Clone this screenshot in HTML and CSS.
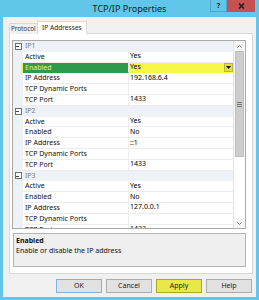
FILE: index.html
```html
<!DOCTYPE html>
<html>
<head>
<meta charset="utf-8">
<link rel="stylesheet" href="styles.css">
</head>
<body>
<div class="window">
  <div class="titlebar">
    <div class="title">TCP/IP Properties</div>
    <div class="caption-btns">
      <div class="cap-help">?</div>
      <div class="cap-close">
        <svg width="7" height="6" viewBox="0 0 7 6"><path d="M1 0.5 L6 5.5 M6 0.5 L1 5.5" stroke="#222" stroke-width="1.6"/></svg>
      </div>
    </div>
  </div>
  <div class="client">
    <div class="tabs">
      <div class="tab">Protocol</div>
      <div class="tab active">IP Addresses</div>
    </div>
    <div class="panel">
      <div class="grid">
        <div class="rows">
          <div class="cat"><span class="tog"></span><span class="cat-name">IP1</span></div>
          <div class="row"><span class="gut"></span><span class="name">Active</span><span class="val">Yes</span></div>
          <div class="row sel"><span class="gut"></span><span class="name">Enabled</span><span class="val">Yes<span class="drop"><svg width="5" height="3" viewBox="0 0 5 3"><path d="M0 0 H5 L2.5 3 Z" fill="#111"/></svg></span></span></div>
          <div class="row"><span class="gut"></span><span class="name">IP Address</span><span class="val">192.168.6.4</span></div>
          <div class="row"><span class="gut"></span><span class="name">TCP Dynamic Ports</span><span class="val"></span></div>
          <div class="row"><span class="gut"></span><span class="name">TCP Port</span><span class="val">1433</span></div>
          <div class="cat"><span class="tog"></span><span class="cat-name">IP2</span></div>
          <div class="row"><span class="gut"></span><span class="name">Active</span><span class="val">Yes</span></div>
          <div class="row"><span class="gut"></span><span class="name">Enabled</span><span class="val">No</span></div>
          <div class="row"><span class="gut"></span><span class="name">IP Address</span><span class="val">::1</span></div>
          <div class="row"><span class="gut"></span><span class="name">TCP Dynamic Ports</span><span class="val"></span></div>
          <div class="row"><span class="gut"></span><span class="name">TCP Port</span><span class="val">1433</span></div>
          <div class="cat"><span class="tog"></span><span class="cat-name">IP3</span></div>
          <div class="row"><span class="gut"></span><span class="name">Active</span><span class="val">Yes</span></div>
          <div class="row"><span class="gut"></span><span class="name">Enabled</span><span class="val">No</span></div>
          <div class="row"><span class="gut"></span><span class="name">IP Address</span><span class="val">127.0.0.1</span></div>
          <div class="row"><span class="gut"></span><span class="name">TCP Dynamic Ports</span><span class="val"></span></div>
          <div class="row"><span class="gut"></span><span class="name">TCP Port</span><span class="val">1433</span></div>
        </div>
        <div class="scrollbar">
          <div class="sb-btn"><svg width="5" height="3" viewBox="0 0 5 3"><path d="M0.3 2.7 L2.5 0.5 L4.7 2.7" fill="none" stroke="#777" stroke-width="0.9"/></svg></div>
          <div class="sb-thumb"><span class="grip"></span></div>
          <div class="sb-track"></div>
          <div class="sb-btn"><svg width="5" height="3" viewBox="0 0 5 3"><path d="M0.3 0.3 L2.5 2.5 L4.7 0.3" fill="none" stroke="#777" stroke-width="0.9"/></svg></div>
        </div>
      </div>
      <div class="desc">
        <div class="desc-title">Enabled</div>
        <div class="desc-text">Enable or disable the IP address</div>
      </div>
    </div>
    <div class="buttons">
      <div class="btn default">OK</div>
      <div class="btn">Cancel</div>
      <div class="btn apply">Apply</div>
      <div class="btn">Help</div>
    </div>
  </div>
</div>
</body>
</html>
```

FILE: styles.css
```css
* { box-sizing: border-box; }
html, body { margin: 0; padding: 0; }
body {
  background: #62c6eb;
  font-family: "Noto Sans", "Open Sans", sans-serif;
  font-size: 7px;
  color: #000;
}
.window {
  width: 259px;
  height: 300px;
  background: #62c6eb;
  display: flex;
  flex-direction: column;
}
.titlebar {
  height: 17px;
  display: flex;
  align-items: flex-start;
}
.title {
  flex: 1;
  margin-left: 49px;
  text-align: center;
  font-size: 9px;
  line-height: 17px;
  color: #1a1a1a;
}
.caption-btns {
  display: flex;
  margin-right: 4px;
}
.cap-help {
  width: 17px;
  height: 12px;
  border: 1px solid #4aa6c8;
  border-top: none;
  background: #62c6eb;
  font-size: 7px;
  font-weight: bold;
  line-height: 11px;
  text-align: center;
  color: #111;
}
.cap-close {
  width: 28px;
  height: 12px;
  background: #c75050;
  display: flex;
  align-items: center;
  justify-content: center;
}
.client {
  flex: 1;
  margin: 0 3px 3px 3px;
  background: #f0f0f0;
  padding: 4px 4px 0 6px;
  display: flex;
  flex-direction: column;
}
.tabs {
  display: flex;
  align-items: flex-end;
  height: 13px;
  position: relative;
  z-index: 1;
  margin-bottom: -1px;
}
.tab {
  height: 11px;
  width: 29px;
  padding: 0 0 0 1px;
  border: 1px solid #d9d9d9;
  border-bottom: none;
  background: #f0f0f0;
  font-size: 6.3px;
  line-height: 10px;
  color: #333;
  white-space: nowrap;
  overflow: hidden;
}
.tab.active {
  height: 13px;
  width: 50px;
  background: #fff;
  padding-left: 4px;
  margin-left: -1px;
  font-size: 6.6px;
  line-height: 11px;
  color: #222;
}
.panel {
  height: 241px;
  width: 244px;
  border: 1px solid #d9d9d9;
  background: #fff;
  padding: 6px 6px 0 2px;
  display: flex;
  flex-direction: column;
}
.grid {
  height: 189px;
  border: 1px solid #a9a9a9;
  display: flex;
  overflow: hidden;
}
.rows {
  flex: 1;
  display: flex;
  flex-direction: column;
  overflow: hidden;
}
.cat, .row {
  flex: 0 0 10.8px;
  height: 10.8px;
  display: flex;
  align-items: stretch;
  line-height: 10.8px;
}
.cat {
  background: #eef1f6;
}
.tog {
  width: 10px;
  display: flex;
  align-items: center;
  justify-content: center;
  position: relative;
}
.tog::before {
  content: "";
  width: 5px;
  height: 5px;
  border: 1px solid #6d6d6d;
  background: #fff;
}
.tog::after {
  content: "";
  position: absolute;
  left: 3px;
  width: 3px;
  height: 1px;
  top: 5px;
  background: #444;
}
.cat-name {
  padding-left: 2px;
  color: #7a7a7a;
}
.gut {
  width: 10px;
  background: #eef1f6;
}
.name {
  width: 106px;
  padding-left: 2px;
  border-bottom: 1px solid #ededed;
  border-right: 1px solid #ededed;
  color: #111;
  white-space: nowrap;
}
.val {
  flex: 1;
  padding-left: 1px;
  border-bottom: 1px solid #ededed;
  display: flex;
  justify-content: space-between;
  align-items: center;
  white-space: nowrap;
}
.row.sel .gut {
  background: linear-gradient(to right, #eef1f6 0 8px, #f2f24a 8px 10px);
}
.row.sel .name {
  background: #2f9a4b;
  color: #e9f58a;
  border-bottom-color: #2f9a4b;
}
.row.sel .val {
  background: #f7f74a;
  border-bottom-color: #f7f74a;
}
.drop {
  width: 9px;
  height: 9px;
  background: #e0e03c;
  border: 1px solid #b7b730;
  display: flex;
  align-items: center;
  justify-content: center;
}
.scrollbar {
  width: 12px;
  background: #f7f7f7;
  border-left: 1px solid #e3e3e3;
  display: flex;
  flex-direction: column;
}
.sb-btn {
  height: 10px;
  display: flex;
  align-items: center;
  justify-content: center;
  background: #f7f7f7;
}
.sb-thumb {
  height: 106px;
  margin: 0 1px;
  background: #cdcdcd;
  border: 1px solid #c0c0c0;
  display: flex;
  align-items: center;
  justify-content: center;
}
.grip {
  width: 5px;
  height: 5px;
  background: repeating-linear-gradient(to bottom, #777 0 1px, transparent 1px 2px);
}
.sb-track {
  flex: 1;
  background: #fff;
}
.desc {
  margin-top: 4px;
  margin-left: 1px;
  height: 34px;
  border: 1px solid #b4b4b4;
  background: #efefef;
  padding: 2px 2px;
  line-height: 10px;
}
.desc-title {
  font-weight: bold;
  color: #111;
}
.desc-text {
  color: #111;
}
.buttons {
  display: flex;
  justify-content: flex-end;
  gap: 4px;
  padding-top: 5px;
}
.btn {
  width: 46px;
  height: 14px;
  border: 1px solid #adadad;
  background: #e1e1e1;
  text-align: center;
  line-height: 12px;
  color: #222;
}
.btn.default {
  border-color: #7fb3e0;
}
.btn.apply {
  background: #e8e84a;
  border-color: #a9a924;
}
```
